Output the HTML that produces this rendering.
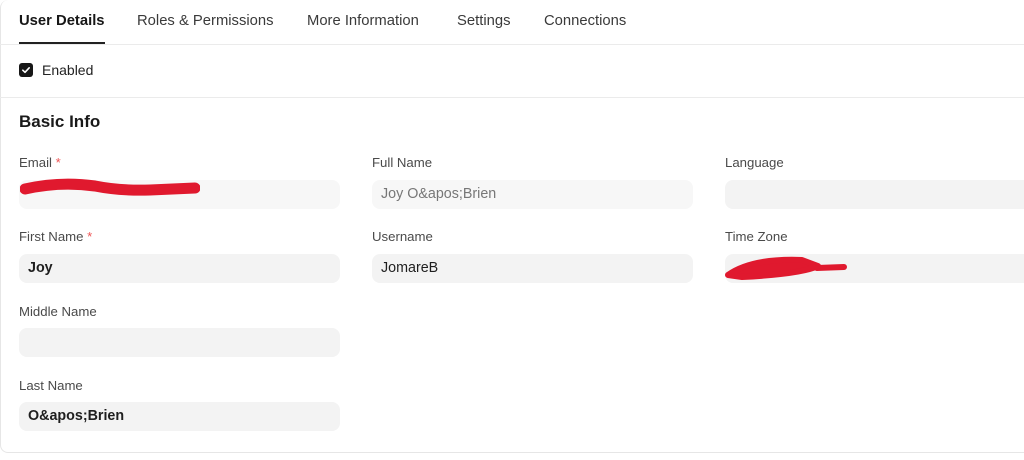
<!DOCTYPE html>
<html><head><style>
body{margin:0;background:#fff;font-family:"Liberation Sans",sans-serif;color:#1f1f1f;width:1024px;height:460px;overflow:hidden;position:relative}
.box{position:absolute;left:0;top:0;width:1030px;height:452px;border:1px solid #e6e6e6;border-radius:8px;border-top:none}
.tab{position:absolute;top:13px;font-size:14.8px;color:#3a3a3a}
.abs{position:absolute}
.lbl{position:absolute;font-size:13.2px;color:#4a4a4a}
.inp{position:absolute;height:29px;border-radius:8px;background:#f3f3f3;font-size:14.3px;line-height:29px;padding-left:9px;box-sizing:border-box}
.hr{position:absolute;left:0;width:1024px;height:1px;background:#ebebeb}
</style></head><body>
<div class="box"></div>
<div class="tab" style="left:19px;color:#171717;font-weight:600">User Details</div>
<div class="abs" style="left:19px;top:42px;width:86px;height:2px;background:#222"></div>
<div class="tab" style="left:137px">Roles &amp; Permissions</div>
<div class="tab" style="left:307px">More Information</div>
<div class="tab" style="left:457px">Settings</div>
<div class="tab" style="left:544px">Connections</div>
<div class="hr" style="top:44px"></div>
<div class="abs" style="left:19px;top:63px;width:14px;height:14px;background:#171717;border-radius:3px"><svg width="14" height="14" viewBox="0 0 14 14"><path d="M3.8 7.2l2.2 2.1 4.2-4.5" stroke="#fff" stroke-width="1.6" fill="none" stroke-linecap="round" stroke-linejoin="round"/></svg></div>
<div class="abs" style="left:42px;top:62px;font-size:14px;color:#222">Enabled</div>
<div class="hr" style="top:97px"></div>
<div class="abs" style="left:19px;top:112px;font-size:17px;font-weight:600;color:#1a1a1a">Basic Info</div>

<div class="lbl" style="left:19px;top:155px">Email <span style="color:#e55">*</span></div>
<div class="inp" style="left:19px;top:180px;width:321px;background:#f7f7f7"></div>
<svg class="abs" style="left:20px;top:178px" width="180" height="26"><path d="M5 11 Q40 3 75 8 Q100 13 130 12 L175 10" stroke="#e0192e" stroke-width="11" fill="none" stroke-linecap="round"/></svg>
<div class="lbl" style="left:372px;top:155px">Full Name</div>
<div class="inp" style="left:372px;top:180px;width:321px;background:#f7f7f7;color:#777">Joy O&amp;apos;Brien</div>
<div class="lbl" style="left:725px;top:155px">Language</div>
<div class="inp" style="left:725px;top:180px;width:310px"></div>

<div class="lbl" style="left:19px;top:229px">First Name <span style="color:#e55">*</span></div>
<div class="inp" style="left:19px;top:254px;width:321px;font-weight:600">Joy</div>
<div class="lbl" style="left:372px;top:229px">Username</div>
<div class="inp" style="left:372px;top:254px;width:321px">JomareB</div>
<div class="lbl" style="left:725px;top:229px">Time Zone</div>
<div class="inp" style="left:725px;top:254px;width:310px"></div>
<svg class="abs" style="left:722px;top:250px" width="130" height="35"><path d="M6 25 Q30 8 80 10 L96 16 Q80 24 20 27Z" fill="#e0192e" stroke="#e0192e" stroke-width="6" stroke-linejoin="round"/><path d="M95 18 L122 17" stroke="#e0192e" stroke-width="6" stroke-linecap="round"/></svg>

<div class="lbl" style="left:19px;top:304px">Middle Name</div>
<div class="inp" style="left:19px;top:328px;width:321px"></div>
<div class="lbl" style="left:19px;top:378px">Last Name</div>
<div class="inp" style="left:19px;top:402px;width:321px;font-weight:600">O&amp;apos;Brien</div>
</body></html>
